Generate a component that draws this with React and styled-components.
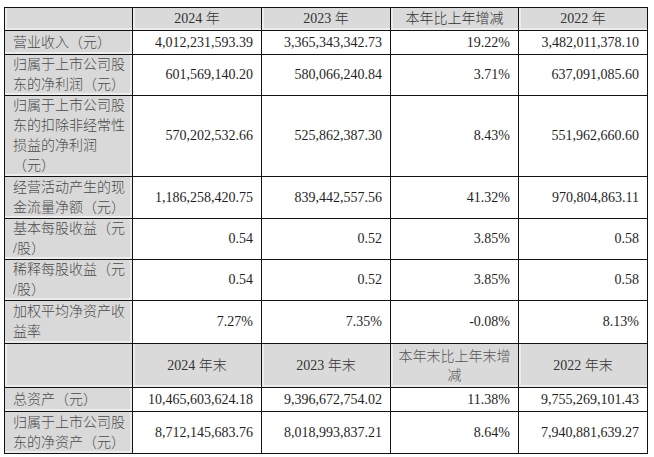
import React from "react";
import styled, { createGlobalStyle } from "styled-components";

const GlobalStyle = createGlobalStyle`
  body {
    margin: 0;
    background: #fff;
    font-family: "Liberation Serif", "Noto Sans CJK SC", serif;
  }
`;

const Page = styled.div`
  padding: 7px 0 0 4px;
`;

const Table = styled.table`
  border-collapse: collapse;
  table-layout: fixed;
  width: 644px;
  font-size: 14px;
  line-height: 20px;
  color: #1f1f1f;
`;

const Row = styled.tr`
  height: ${(p) => p.$h}px;
`;

const Cell = styled.td`
  border: 1px solid #111;
  padding: 0 8px;
  vertical-align: middle;
  white-space: nowrap;
`;

const LabelCell = styled(Cell)`
  background: #d9d9d9;
  color: #4a4a4a;
  font-weight: 300;
  text-align: left;
  padding: 0 4px 0 8px;
  box-shadow: inset -2px -2px 0 #ececec;
`;

const HeadCell = styled(Cell)`
  background: #dadada;
  color: #333;
  font-weight: 300;
  text-align: center;
  box-shadow: inset 2px -2px 0 #ececec;
`;

const HeadWrap = styled(HeadCell)`
  white-space: normal;
  line-height: 19px;
  padding: 0 6px;
  color: #555;
`;

const NumCell = styled(Cell)`
  text-align: right;
`;

const rows1 = [
  { h: 24, label: ["营业收入（元）"], v: ["4,012,231,593.39", "3,365,343,342.73", "19.22%", "3,482,011,378.10"] },
  { h: 41, label: ["归属于上市公司股", "东的净利润（元）"], v: ["601,569,140.20", "580,066,240.84", "3.71%", "637,091,085.60"] },
  { h: 80, label: ["归属于上市公司股", "东的扣除非经常性", "损益的净利润", "（元）"], v: ["570,202,532.66", "525,862,387.30", "8.43%", "551,962,660.60"] },
  { h: 42, label: ["经营活动产生的现", "金流量净额（元）"], v: ["1,186,258,420.75", "839,442,557.56", "41.32%", "970,804,863.11"] },
  { h: 40, label: ["基本每股收益（元", "/股）"], v: ["0.54", "0.52", "3.85%", "0.58"] },
  { h: 40, label: ["稀释每股收益（元", "/股）"], v: ["0.54", "0.52", "3.85%", "0.58"] },
  { h: 43, label: ["加权平均净资产收", "益率"], v: ["7.27%", "7.35%", "-0.08%", "8.13%"] },
];

const rows2 = [
  { h: 24, label: ["总资产（元）"], v: ["10,465,603,624.18", "9,396,672,754.02", "11.38%", "9,755,269,101.43"] },
  { h: 42, label: ["归属于上市公司股", "东的净资产（元）"], v: ["8,712,145,683.76", "8,018,993,837.21", "8.64%", "7,940,881,639.27"] },
];

const Label = ({ lines }) =>
  lines.map((l, i) => (
    <React.Fragment key={i}>
      {i > 0 && <br />}
      {l}
    </React.Fragment>
  ));

const DataRows = ({ rows }) =>
  rows.map((r, i) => (
    <Row key={i} $h={r.h}>
      <LabelCell>
        <Label lines={r.label} />
      </LabelCell>
      {r.v.map((v, j) => (
        <NumCell key={j}>{v}</NumCell>
      ))}
    </Row>
  ));

export default function App() {
  return (
    <>
      <GlobalStyle />
      <Page>
        <Table>
          <colgroup>
            <col style={{ width: 128 }} />
            <col style={{ width: 129 }} />
            <col style={{ width: 129 }} />
            <col style={{ width: 128 }} />
            <col style={{ width: 129 }} />
          </colgroup>
          <tbody>
            <Row $h={23}>
              <HeadCell />
              <HeadCell>2024 年</HeadCell>
              <HeadCell>2023 年</HeadCell>
              <HeadCell>本年比上年增减</HeadCell>
              <HeadCell>2022 年</HeadCell>
            </Row>
            <DataRows rows={rows1} />
            <Row $h={44}>
              <HeadCell />
              <HeadCell>2024 年末</HeadCell>
              <HeadCell>2023 年末</HeadCell>
              <HeadWrap>本年末比上年末增减</HeadWrap>
              <HeadCell>2022 年末</HeadCell>
            </Row>
            <DataRows rows={rows2} />
          </tbody>
        </Table>
      </Page>
    </>
  );
}
